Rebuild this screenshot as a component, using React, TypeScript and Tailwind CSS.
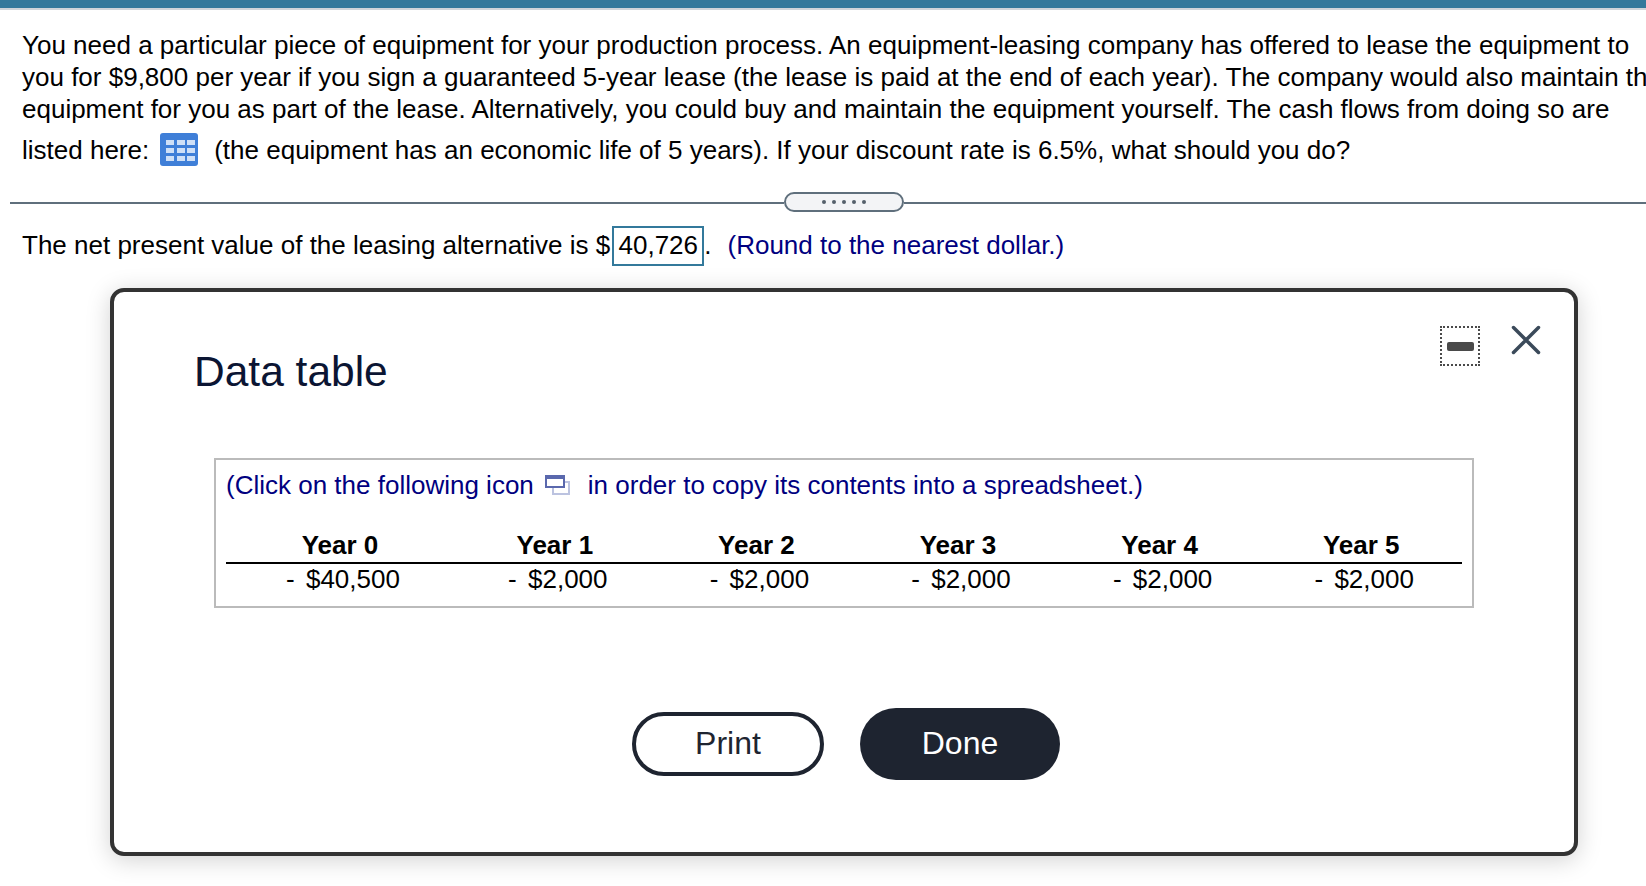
const years = [
  { label: "Year 0", value: "$40,500" },
  { label: "Year 1", value: "$2,000" },
  { label: "Year 2", value: "$2,000" },
  { label: "Year 3", value: "$2,000" },
  { label: "Year 4", value: "$2,000" },
  { label: "Year 5", value: "$2,000" },
]

const GridIcon = () => (
  <svg width="38" height="33" viewBox="0 0 38 33" className="shrink-0">
    <rect width="38" height="33" rx="3" fill="#3f7fd8" />
    {[7, 15, 23].map((y) =>
      [6, 17, 27].map((x) => <rect key={`${x}-${y}`} x={x} y={y} width="8" height="5" fill="#cfe0f7" />),
    )}
  </svg>
)

const CopyIcon = () => (
  <svg width="25" height="22" viewBox="0 0 25 22" className="shrink-0">
    <rect x="8" y="8" width="16" height="12" fill="none" stroke="#bcc3e0" strokeWidth="2" />
    <rect x="1" y="2" width="18" height="11" fill="#fff" stroke="#5a68ad" strokeWidth="2" />
    <rect x="1" y="2" width="18" height="3" fill="#5a68ad" />
  </svg>
)

const MinimizeIcon = () => (
  <div className="w-10 h-10 border-2 border-dotted border-[#4a4a4a] flex items-center justify-center">
    <div className="w-[27px] h-[9px] rounded-[2px] bg-[#4a4a4a]" />
  </div>
)

const CloseIcon = () => (
  <svg width="32" height="32" viewBox="0 0 32 32" fill="none" stroke="#3b4a5a" strokeWidth="3.5" strokeLinecap="round">
    <path d="M3.5 3.5l25 25M28.5 3.5l-25 25" />
  </svg>
)

export default function App() {
  return (
    <div className="w-[1646px] h-[886px] overflow-hidden bg-white text-black font-['Liberation_Sans',Arial,sans-serif]">
      <div className="h-[10px] bg-[#33799b] border-b-2 border-[#cfd5d9]" />

      <div className="pl-[22px] pt-[19px] text-[26px] leading-[32px] whitespace-nowrap">
        <p>You need a particular piece of equipment for your production process. An equipment-leasing company has offered to lease the equipment to</p>
        <p>you for $9,800 per year if you sign a guaranteed 5-year lease (the lease is paid at the end of each year). The company would also maintain the</p>
        <p>equipment for you as part of the lease. Alternatively, you could buy and maintain the equipment yourself. The cash flows from doing so are</p>
        <p className="flex items-center mt-[8px]">
          listed here:
          <span className="ml-[11px] mr-[16px] flex">
            <GridIcon />
          </span>
          (the equipment has an economic life of 5 years). If your discount rate is 6.5%, what should you do?
        </p>
      </div>

      <div className="ml-[10px] mt-[25px] h-[22px] flex items-center">
        <div className="w-[774px] h-[2px] mt-[2px] bg-[#5f6f7c]" />
        <div className="w-[120px] h-[20px] shrink-0 rounded-[10px] border-2 border-[#5f6f7c] bg-[#f3f4f6] flex items-center justify-center gap-[6px]">
          {[0, 1, 2, 3, 4].map((i) => (
            <span key={i} className="w-[4px] h-[4px] rounded-full bg-[#55606b]" />
          ))}
        </div>
        <div className="flex-1 h-[2px] mt-[2px] bg-[#5f6f7c]" />
      </div>

      <div className="pl-[22px] mt-[13px] h-[40px] pb-[2px] flex items-center text-[26px] whitespace-nowrap">
        The net present value of the leasing alternative is $
        <span className="ml-[2px] w-[92px] h-[40px] pb-[2px] self-start border-2 border-[#33799b] flex items-center justify-center">40,726</span>
        <span>.</span>
        <span className="ml-[16px] text-[#000080]">(Round to the nearest dollar.)</span>
      </div>

      <div className="relative ml-[110px] mt-[22px] w-[1468px] h-[568px] rounded-[14px] border-4 border-[#333333] bg-white shadow-[0_4px_24px_rgba(0,0,0,0.18)] pl-[80px]">
        <div className="absolute right-[94px] top-[34px]">
          <MinimizeIcon />
        </div>
        <div className="absolute right-[32px] top-[32px]">
          <CloseIcon />
        </div>

        <h1 className="pt-[56px] text-[42.5px] leading-[48px] text-[#0b1533]">Data table</h1>

        <div className="mt-[62px] ml-[20px] w-[1260px] h-[150px] border-2 border-[#bbbbbb] px-[10px]">
          <div className="h-[50px] flex items-center text-[26px] text-[#000080]">
            (Click on the following icon
            <span className="ml-[11px] mr-[18px] flex">
              <CopyIcon />
            </span>
            in order to copy its contents into a spreadsheet.)
          </div>
          <div className="grid grid-cols-[228px_repeat(5,1fr)] mt-[19px] text-[26px] text-center">
            {years.map((y) => (
              <div key={y.label} className="font-bold leading-[32px] border-b-2 border-black h-[35px]">
                {y.label}
              </div>
            ))}
            {years.map((y) => (
              <div key={y.label} className="pl-[6px] leading-[30px]">
                <span className="mr-[4px]">-</span> {y.value}
              </div>
            ))}
          </div>
        </div>

        <div className="mt-[100px] ml-[438px] flex items-center gap-[36px] text-[32px]">
          <button className="w-[192px] h-[64px] pb-[2px] rounded-full border-4 border-[#1e2430] text-[#1e2430]">Print</button>
          <button className="w-[200px] h-[72px] pb-[2px] rounded-full bg-[#1e2430] text-white">Done</button>
        </div>
      </div>
    </div>
  )
}
